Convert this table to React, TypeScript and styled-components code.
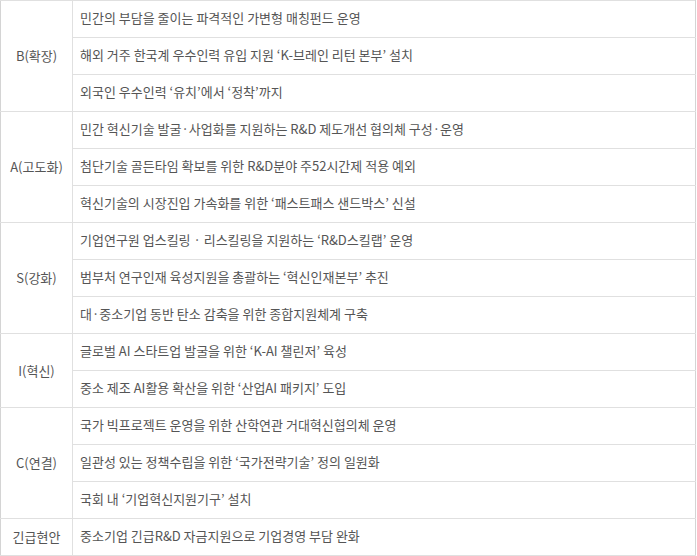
import React from "react";
import styled, { createGlobalStyle } from "styled-components";

const GlobalStyle = createGlobalStyle`
    html, body {
        margin: 0;
        padding: 0;
        background: #fff;
    }
`;

const Table = styled.table`
    width: 696px;
    border-collapse: collapse;
    border: 1px solid #d4d4d4;
    font-family: "Noto Sans CJK KR", "Noto Sans", sans-serif;
    font-size: 13px;
    line-height: 16px;
    color: #555;
`;

const Row = styled.tr`
    height: 37px;
`;

const Category = styled.th`
    width: 71px;
    padding: 0;
    font-weight: 400;
    text-align: center;
    border: 1px solid #e0e0e0;
    border-left-color: #d4d4d4;
`;

const Item = styled.td`
    padding: 0 0 2px 7px;
    border: 1px solid #e0e0e0;
    border-right-color: #d4d4d4;
    white-space: nowrap;
`;

type Group = { label: string; items: string[] };

const groups: Group[] = [
    {
        label: "B(확장)",
        items: [
            "민간의 부담을 줄이는 파격적인 가변형 매칭펀드 운영",
            "해외 거주 한국계 우수인력 유입 지원 ‘K-브레인 리턴 본부’ 설치",
            "외국인 우수인력 ‘유치’에서 ‘정착’까지",
        ],
    },
    {
        label: "A(고도화)",
        items: [
            "민간 혁신기술 발굴·사업화를 지원하는 R&D 제도개선 협의체 구성·운영",
            "첨단기술 골든타임 확보를 위한 R&D분야 주52시간제 적용 예외",
            "혁신기술의 시장진입 가속화를 위한 ‘패스트패스 샌드박스’ 신설",
        ],
    },
    {
        label: "S(강화)",
        items: [
            "기업연구원 업스킬링 · 리스킬링을 지원하는 ‘R&D스킬랩’ 운영",
            "범부처 연구인재 육성지원을 총괄하는 ‘혁신인재본부’ 추진",
            "대·중소기업 동반 탄소 감축을 위한 종합지원체계 구축",
        ],
    },
    {
        label: "I(혁신)",
        items: [
            "글로벌 AI 스타트업 발굴을 위한 ‘K-AI 챌린저’ 육성",
            "중소 제조 AI활용 확산을 위한 ‘산업AI 패키지’ 도입",
        ],
    },
    {
        label: "C(연결)",
        items: [
            "국가 빅프로젝트 운영을 위한 산학연관 거대혁신협의체 운영",
            "일관성 있는 정책수립을 위한 ‘국가전략기술’ 정의 일원화",
            "국회 내 ‘기업혁신지원기구’ 설치",
        ],
    },
    {
        label: "긴급현안",
        items: ["중소기업 긴급R&D 자금지원으로 기업경영 부담 완화"],
    },
];

export const PolicyTable: React.FC = () => {
    return (
        <Table>
            <tbody>
                {groups.map((group) =>
                    group.items.map((item, i) => (
                        <Row key={group.label + i}>
                            {i === 0 && (
                                <Category rowSpan={group.items.length}>
                                    {group.label}
                                </Category>
                            )}
                            <Item>{item}</Item>
                        </Row>
                    ))
                )}
            </tbody>
        </Table>
    );
};

const App: React.FC = () => (
    <>
        <GlobalStyle />
        <PolicyTable />
    </>
);

export default App;
